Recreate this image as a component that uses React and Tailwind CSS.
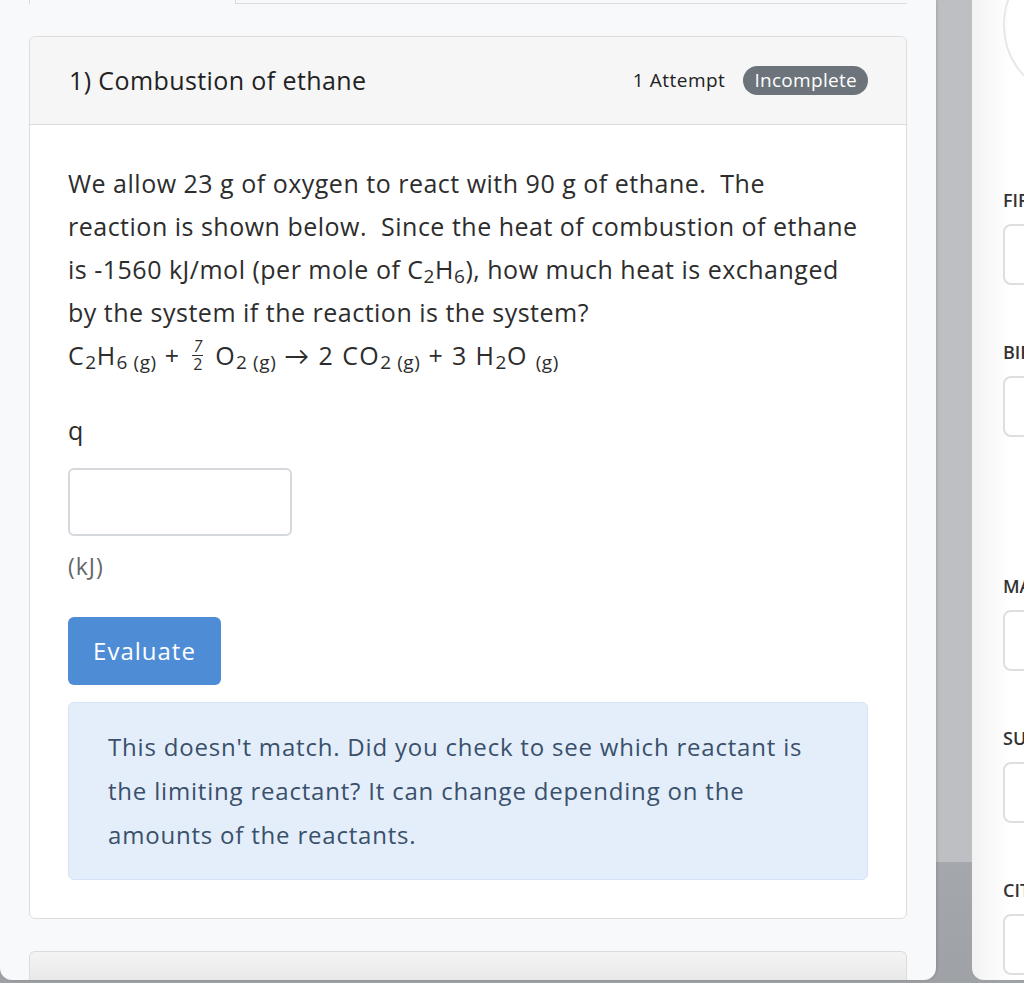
import React from "react";

const font = { fontFamily: '"Open Sans", "Lato", sans-serif' };

function Sub({ children }) {
  return <sub className="text-[19px] relative top-[4px] align-baseline leading-none tracking-[0.6px]">{children}</sub>;
}

function Frac() {
  return (
    <span className="inline-flex flex-col items-center align-middle mx-[12px] text-[16px] leading-[17px] tracking-normal relative -top-[3px]">
      <span className="border-b border-[#333] px-[1px] italic">7</span>
      <span>2</span>
    </span>
  );
}

function SideField({ label }) {
  return (
    <div className="flex flex-col">
      <span className="text-[18px] font-semibold text-[#333] leading-[24px] whitespace-nowrap">{label}</span>
      <div className="mt-[12px] h-[61px] w-[80px] rounded-[8px] border-2 border-[#dedede] bg-white" />
    </div>
  );
}

export default function App() {
  return (
    <div
      className="relative flex h-[983px] w-[1024px] overflow-hidden bg-[linear-gradient(to_bottom,#bebfc3_0,#bebfc3_862px,#a4a8ac_862px,#9ea2a6_983px)] text-[#2d2d2d]"
      style={font}
    >
      {/* main panel */}
      <div className="flex h-[980px] w-[936px] shrink-0 flex-col rounded-b-[12px] bg-[#f8f9fa] px-[29px] shadow-[1px_0_3px_rgba(0,0,0,0.15)]">
        {/* tabs edge */}
        <div className="flex h-[4px]">
          <div className="w-[207px] border-x border-[#dcdcdc]" />
          <div className="flex-1 border-b border-[#dcdcdc]" />
        </div>

        {/* card */}
        <div className="mt-[32px] flex flex-col rounded-[6px] border border-[#dcdcdc] bg-white">
          <div className="flex h-[88px] items-center justify-between rounded-t-[6px] border-b border-[#dcdcdc] bg-[#f6f6f6] pl-[39px] pr-[38px]">
            <h2 className="text-[25px] leading-none tracking-[0.4px] text-[#222]">1) Combustion of ethane</h2>
            <div className="flex items-center gap-[18px]">
              <span className="text-[19px] tracking-[0.5px] text-[#222]">1 Attempt</span>
              <span className="flex h-[29px] items-center rounded-full bg-[#6c737a] px-[11px] text-[19px] tracking-[0.3px] text-white">
                Incomplete
              </span>
            </div>
          </div>

          <div className="flex flex-col px-[38px] pt-[37px] pb-[38px]">
            <p className="text-[25px] leading-[43px] tracking-[0.5px] whitespace-nowrap">
              We allow 23 g of oxygen to react with 90 g of ethane.&nbsp; The
              <br />
              reaction is shown below.&nbsp; Since the heat of combustion of ethane
              <br />
              is -1560 kJ/mol (per mole of C<Sub>2</Sub>H<Sub>6</Sub>), how much heat is exchanged
              <br />
              by the system if the reaction is the system?
              <br />
              <span className="tracking-[1.4px]">
                C<Sub>2</Sub>H<Sub>6 (g)</Sub> +<Frac />O<Sub>2 (g)</Sub> → 2 CO<Sub>2 (g)</Sub> + 3 H<Sub>2</Sub>O <Sub>(g)</Sub>
              </span>
            </p>

            <p className="mt-[32px] text-[25px] leading-[43px]">q</p>

            <div className="mt-[16px] h-[68px] w-[224px] rounded-[6px] border-2 border-[#d5d8dc] bg-white" />

            <p className="mt-[12px] text-[23px] leading-[36px] tracking-[1px] text-[#666]">(kJ)</p>

            <button className="mt-[33px] flex h-[68px] w-[153px] items-center justify-center rounded-[6px] bg-[#4e8dd6] text-[24px] tracking-[1px] text-white">
              Evaluate
            </button>

            <div className="mt-[17px] rounded-[6px] border border-[#d4e3f5] bg-[#e3eefa] pl-[39px] pr-[20px] py-[22px] text-[24px] leading-[44px] tracking-[0.8px] text-[#3a506b] whitespace-nowrap">
              This doesn't match. Did you check to see which reactant is
              <br />
              the limiting reactant? It can change depending on the
              <br />
              amounts of the reactants.
            </div>
          </div>
        </div>

        {/* next card */}
        <div className="mt-[32px] flex-1 rounded-t-[6px] border border-b-0 border-[#dcdcdc] bg-[linear-gradient(to_bottom,#f4f4f4,#e9e9e9)]" />
      </div>

      {/* side panel */}
      <div className="relative ml-[36px] flex h-[980px] flex-1 flex-col overflow-hidden rounded-bl-[12px] bg-[linear-gradient(to_right,#f3f3f3,#ffffff_40px)] pl-[31px] pt-[188px]">
        <div className="absolute left-[31px] -top-[50px] h-[150px] w-[150px] rounded-full border-2 border-[#e8e8e8]" />
        <div className="flex flex-col gap-[55px]">
          <SideField label="FIRST" />
          <SideField label="BIRTH" />
        </div>
        <div className="mt-[137px] flex flex-col gap-[55px]">
          <SideField label="MAIL" />
          <SideField label="SUB" />
          <SideField label="CITY" />
        </div>
      </div>
    </div>
  );
}
